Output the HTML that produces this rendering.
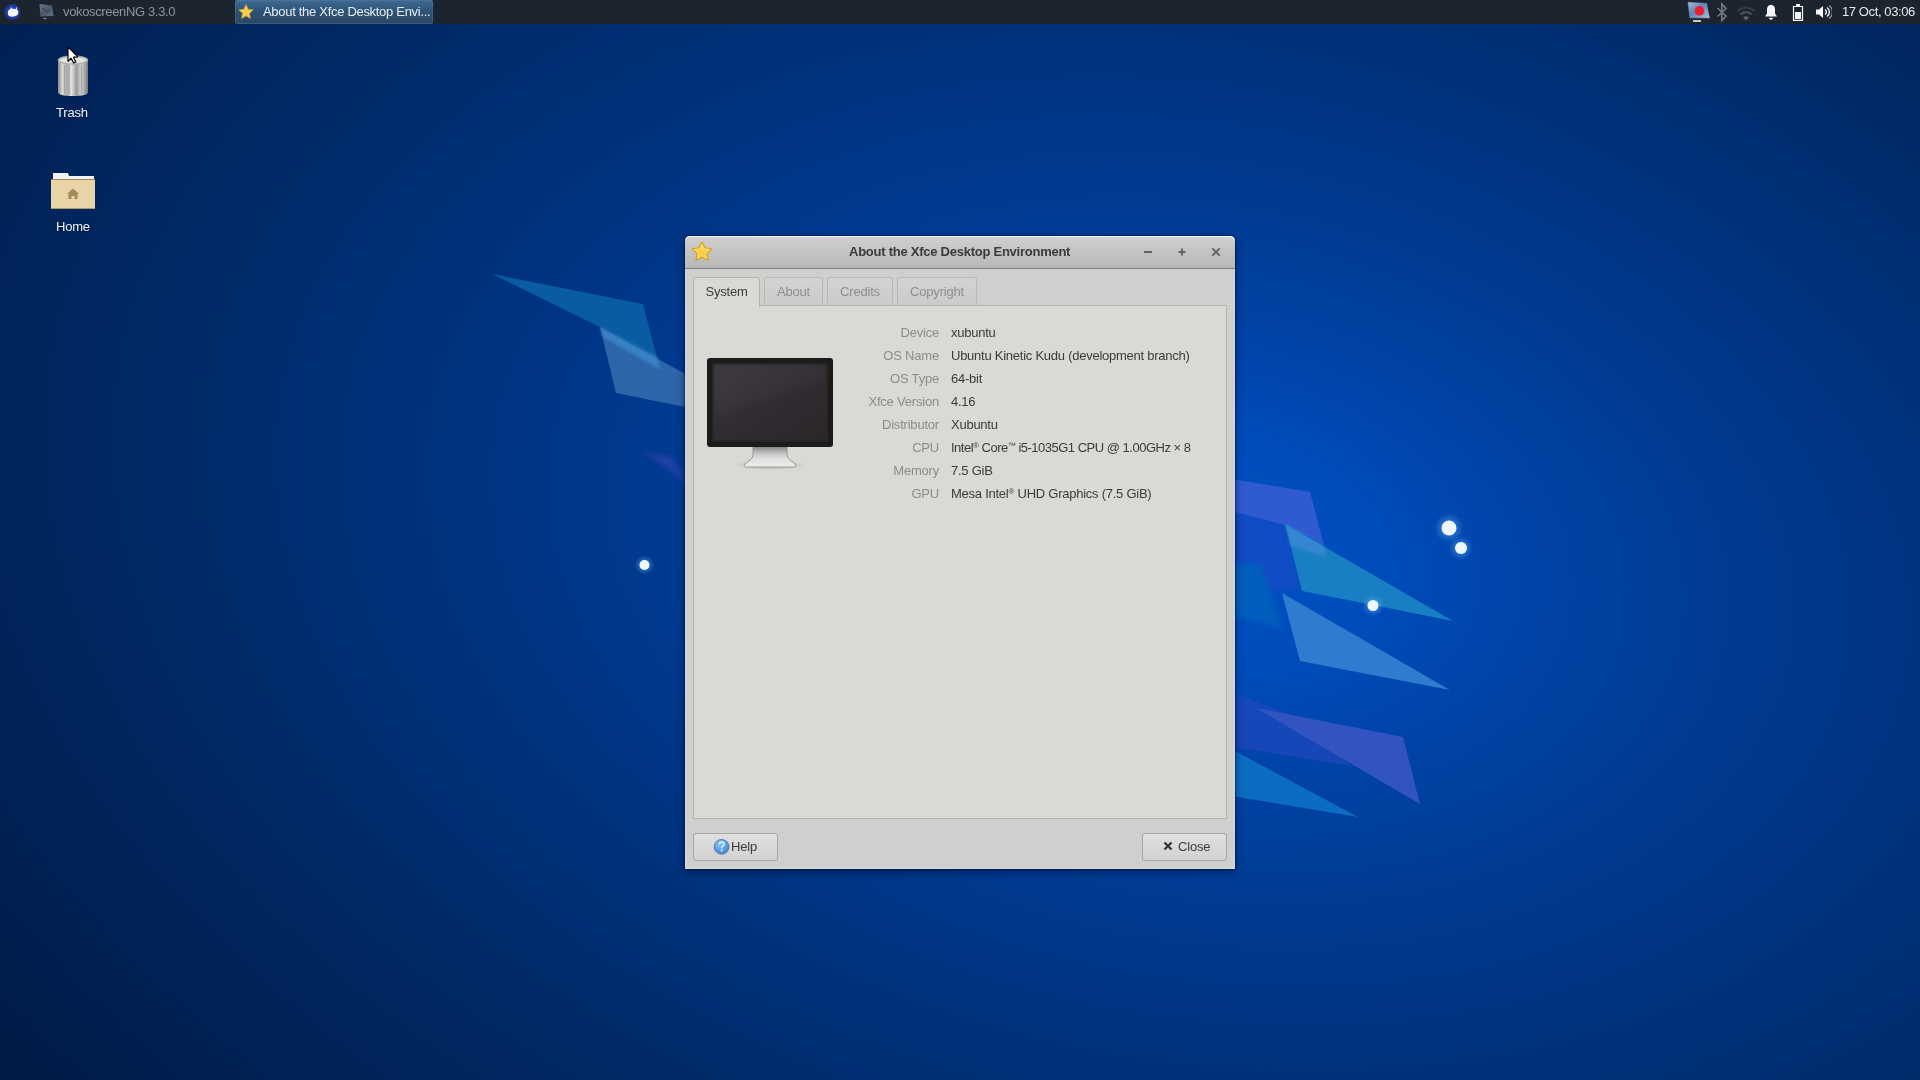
<!DOCTYPE html>
<html><head><meta charset="utf-8">
<style>
*{box-sizing:border-box;margin:0;padding:0}
html,body{width:1920px;height:1080px;overflow:hidden}
body{position:relative;font-family:"Liberation Sans",sans-serif;background:#002a68}
#bgw{position:absolute;left:0;top:0;width:1920px;height:1080px;overflow:hidden}
#bg{position:absolute;left:-800px;top:-950px;width:4000px;height:3000px;transform:rotate(10deg);
background:radial-gradient(ellipse 2000px 1300px at 2000px 1500px, #004ec0 0%, #004ec0 5%, #004bb8 10%, #0045ab 15%, #0041a0 20%, #00388c 30%, #00317a 40%, #002b6b 50%, #00255c 60%, #001f4f 70%, #001a42 80%, #001536 90%, #00102a 100%);}
svg.wall{position:absolute;left:0;top:0}
body>*{will-change:transform}
.abs{position:absolute}
.t{position:absolute;white-space:nowrap}
#panel{position:absolute;left:0;top:0;width:1920px;height:24px;background:#1c2430}
#dlg{position:absolute;left:685px;top:236px;width:550px;height:633px;background:#cfcfcd;border-radius:5px 5px 0 0;box-shadow:0 0 0 1px rgba(0,12,40,0.45),0 3px 9px rgba(0,0,30,0.5)}
#title{position:absolute;left:0;top:0;width:550px;height:33px;border-radius:5px 5px 0 0;background:linear-gradient(#d4d1da,#cbcbc9 20%,#c2c2c0 55%,#b8b8b6);border-bottom:1px solid #7e7e7e;box-shadow:inset 0 1px 0 #eaf6ff}
.lab{position:absolute;font-size:13px;color:#8c8c8c;white-space:nowrap;text-align:right;width:200px;letter-spacing:-0.2px}
.val{position:absolute;font-size:13px;color:#3b3b3b;white-space:nowrap;letter-spacing:-0.25px}
.tab{position:absolute;top:277px;height:28px;border:1px solid #b9b9b7;border-bottom:none;border-radius:3px 3px 0 0;background:linear-gradient(#d3d3d1,#cbcbc9);font-size:13px;color:#8e8e8e;text-align:center;line-height:27px;letter-spacing:-0.2px}
.btn{position:absolute;height:28px;border:1px solid #a6a6a4;border-radius:3px;background:linear-gradient(#e0e0de,#d2d2d0);font-size:13px;color:#3b3b3b}
</style></head><body>
<div id="bgw"><div id="bg"></div></div>

<svg class="wall" width="1920" height="1080" viewBox="0 0 1920 1080">
 <defs>
  <filter id="bl3" x="-20%" y="-20%" width="140%" height="140%"><feGaussianBlur stdDeviation="2.5"/></filter>
  <filter id="bl1" x="-20%" y="-20%" width="140%" height="140%"><feGaussianBlur stdDeviation="1.5"/></filter>
  <radialGradient id="glow"><stop offset="0.3" stop-color="#70b8ff" stop-opacity="0.45"/><stop offset="1" stop-color="#70b8ff" stop-opacity="0"/></radialGradient>
 </defs>
 <!-- left shapes -->
 <polygon points="492,274 643,304 657,358 600,327" fill="#095ca2"/>
 <polygon points="600,327 700,382 700,410 616,393" fill="#2c66a8"/>
 <polygon points="600,327 657,357 661,370 603,337" fill="#3a86c8" opacity="0.85" filter="url(#bl1)"/>
 <polygon points="641,451 672,457 692,488 672,472" fill="#3448b4" opacity="0.55" filter="url(#bl3)"/>
 <!-- right shapes -->
 <polygon points="1220,503 1285,524 1302,591 1220,590" fill="#1a4cc8" opacity="0.55" filter="url(#bl3)"/>
 <polygon points="1220,477 1310,492 1323.7,544 1285,525 1220,508" fill="#2f5ad0"/>
 <polygon points="1220,562 1261,565 1282,628 1220,612" fill="#005ebc" filter="url(#bl3)"/>
 <polygon points="1285,524 1453,621 1302,591" fill="#187fc4"/>
 <polygon points="1285,524 1323.7,545 1326,557 1291,546" fill="#3f88d6" opacity="0.75" filter="url(#bl1)"/>
 <polygon points="1282,593 1450,690 1300,661" fill="#2f7bcf"/>
 <polygon points="1220,688 1300,718 1352,766 1220,745" fill="#2448c0" opacity="0.6"/>
 <polygon points="1256,708 1403,737 1420,804" fill="#3254c0"/>
 <polygon points="1220,743 1358,817 1220,794" fill="#0b6cc2"/>
 <!-- dots -->
 <circle cx="644.5" cy="565" r="10" fill="url(#glow)"/><circle cx="644.5" cy="565" r="5" fill="#eef6ff"/>
 <circle cx="1449" cy="528" r="15" fill="url(#glow)"/><circle cx="1449" cy="528" r="7.5" fill="#eef6ff"/>
 <circle cx="1461" cy="548" r="12" fill="url(#glow)"/><circle cx="1461" cy="548" r="6" fill="#eef6ff"/>
 <circle cx="1373" cy="605.5" r="11" fill="url(#glow)"/><circle cx="1373" cy="605.5" r="5.5" fill="#eef6ff"/>
</svg>

<!-- PANEL -->
<div id="panel">
 <!-- xfce mouse logo -->
 <svg class="abs" style="left:4px;top:3px" width="18" height="18" viewBox="0 0 18 18">
  <defs><radialGradient id="xl" cx="0.5" cy="0.5" r="0.55"><stop offset="0.6" stop-color="#1c3eb0"/><stop offset="1" stop-color="#1c3eb0" stop-opacity="0.3"/></radialGradient></defs>
  <circle cx="8.5" cy="9" r="8.3" fill="url(#xl)"/>
  <path d="M3.8 10 C3.8 7.5 5 6.3 6.5 6 L7 4 L8.3 5.8 C9.5 5.6 10.5 5.8 11.5 6.2 L12.5 3.8 L13.2 6.8 C14.2 7.5 14.5 9 14.3 10.5 C13.5 13 10 13.8 7 13.6 C4.8 13.4 3.8 12 3.8 10Z" fill="#f4f7ff"/>
 </svg>
 <!-- vokoscreen task -->
 <svg class="abs" style="left:38px;top:3px" width="17" height="17" viewBox="0 0 17 17">
  <defs><linearGradient id="vt" x1="0" y1="0" x2="1" y2="1"><stop offset="0" stop-color="#6c7888"/><stop offset="0.5" stop-color="#4e5a6c"/><stop offset="1" stop-color="#5c6c88"/></linearGradient></defs>
  <path d="M1.5 1 L14 2.5 L15.5 13 L2.5 13.5Z" fill="url(#vt)"/>
  <path d="M4 5 L9 9 L12 7" stroke="#3c4656" stroke-width="1.2" fill="none"/>
  <rect x="5.5" y="15" width="3" height="1.2" fill="#8a8e94"/>
 </svg>
 <div class="t" style="left:63px;top:4px;font-size:13px;color:#8f949c;letter-spacing:-0.35px">vokoscreenNG 3.3.0</div>
 <!-- active task -->
 <div class="abs" style="left:235px;top:0;width:198px;height:24px;border-radius:2px;background:linear-gradient(#416b94,#2b5478 45%,#2d4762);box-shadow:inset 0 0 0 1px rgba(90,130,170,0.35)"></div>
 <svg class="abs" style="left:237px;top:3px" width="18" height="18" viewBox="0 0 18 18">
  <path d="M9 1.5 L11.2 6.2 L16.3 6.8 L12.5 10.3 L13.5 15.4 L9 12.9 L4.5 15.4 L5.5 10.3 L1.7 6.8 L6.8 6.2Z" fill="#f5cf52" stroke="#c99a2a" stroke-width="0.6"/>
 </svg>
 <div class="t" style="left:263px;top:4px;font-size:13px;color:#e8ecf0;letter-spacing:-0.3px">About the Xfce Desktop Envi...</div>

 <!-- tray -->
 <svg class="abs" style="left:1686px;top:1px" width="26" height="23" viewBox="0 0 26 23">
  <defs><linearGradient id="vk" x1="0" y1="0" x2="1" y2="1"><stop offset="0" stop-color="#a8bcd4"/><stop offset="0.45" stop-color="#5a88bc"/><stop offset="1" stop-color="#aebfd8"/></linearGradient></defs>
  <path d="M2 1.2 L20.5 2.5 L23.5 17 L4 16.8Z" fill="url(#vk)" stroke="#8898b0" stroke-width="0.6"/>
  <circle cx="13.5" cy="9.8" r="4.8" fill="#f01c2c"/>
  <rect x="7" y="19" width="8" height="2" fill="#c8c8c8"/>
 </svg>
 <svg class="abs" style="left:1715px;top:2px" width="14" height="21" viewBox="0 0 14 21">
  <path d="M2.5 6 L11 14 L6.8 18.5 V2 L11 6.5 L2.5 14.5" fill="none" stroke="#74787e" stroke-width="1.7" stroke-linejoin="miter"/>
 </svg>
 <svg class="abs" style="left:1736px;top:5px" width="20" height="16" viewBox="0 0 20 16">
  <path d="M1.5 6 A12.5 12.5 0 0 1 18.5 6" fill="none" stroke="#353b44" stroke-width="2"/>
  <path d="M4.5 9.5 A8 8 0 0 1 15.5 9.5" fill="none" stroke="#4e545c" stroke-width="2"/>
  <path d="M10 15.5 L7 12.6 A4.5 4.5 0 0 1 13 12.6Z" fill="#5e646c"/>
 </svg>
 <svg class="abs" style="left:1764px;top:4px" width="14" height="17" viewBox="0 0 14 17">
  <path d="M7 0.8 C9.8 0.8 11 3 11 5.5 V9.5 L13 12.5 H1 L3 9.5 V5.5 C3 3 4.2 0.8 7 0.8Z" fill="#f4f6f8"/>
  <path d="M5 13.8 H9 A2 2 0 0 1 5 13.8Z" fill="#f4f6f8"/>
 </svg>
 <svg class="abs" style="left:1792px;top:3px" width="12" height="18" viewBox="0 0 12 18">
  <path d="M4 1H8V3H4Z" fill="#f4f6f8"/>
  <path d="M1.5 3.5H10.5V17.3H1.5Z" fill="none" stroke="#f4f6f8" stroke-width="1.2"/>
  <path d="M3 9H9V16H3Z" fill="#f4f6f8"/>
 </svg>
 <svg class="abs" style="left:1815px;top:4px" width="17" height="16" viewBox="0 0 17 16">
  <path d="M1 5.5 H4 L8 2 V14 L4 10.5 H1Z" fill="#f4f6f8"/>
  <path d="M10 5.5 A3 3 0 0 1 10 10.5" fill="none" stroke="#f4f6f8" stroke-width="1.4"/>
  <path d="M12 3.5 A5.5 5.5 0 0 1 12 12.5" fill="none" stroke="#f4f6f8" stroke-width="1.4"/>
  <path d="M14 1.5 A8 8 0 0 1 14 14.5" fill="none" stroke="#8a8e94" stroke-width="1.3"/>
 </svg>
 <div class="t" style="left:1842px;top:4px;font-size:13px;color:#e6e8ea;letter-spacing:-0.4px">17 Oct, 03:06</div>
</div>

<!-- DESKTOP ICONS -->
<svg class="abs" style="left:56px;top:54px" width="34" height="44" viewBox="0 0 34 44">
 <defs>
  <linearGradient id="tc" x1="0" y1="0" x2="1" y2="0">
   <stop offset="0" stop-color="#8c8c8c"/><stop offset="0.15" stop-color="#d8d8d8"/><stop offset="0.3" stop-color="#a8a8a8"/><stop offset="0.45" stop-color="#e4e4e4"/><stop offset="0.6" stop-color="#a0a0a0"/><stop offset="0.78" stop-color="#d0d0d0"/><stop offset="1" stop-color="#7a7a7a"/>
  </linearGradient>
 </defs>
 <path d="M2 6 L2 38 Q2 42 17 42 Q32 42 32 38 L32 6Z" fill="url(#tc)"/>
 <path d="M8.5 11 V40 M13 11.5 V41 M21 11.5 V41 M25.5 11 V40" stroke="#8c8c8c" stroke-width="1.1" opacity="0.55"/>
 <ellipse cx="17" cy="6" rx="15" ry="4.2" fill="#c8c8c8" stroke="#a0a0a0" stroke-width="0.8"/>
 <ellipse cx="17" cy="6.3" rx="12.5" ry="2.8" fill="#e4e4e2"/>
</svg>
<div class="t" style="left:56px;top:105px;font-size:13px;color:#f0f4fa;letter-spacing:-0.2px;text-shadow:0 1px 1px rgba(0,0,0,0.4)">Trash</div>

<svg class="abs" style="left:50px;top:172px" width="46" height="38" viewBox="0 0 46 38">
 <path d="M3 3 L3 1 L18 1 L19 4 L44 4 L44 8 L3 8Z" fill="#f2f2f0"/>
 <rect x="1" y="7" width="44" height="30" fill="#e8d4a6"/>
 <rect x="1" y="7" width="44" height="1" fill="#a08860"/>
 <rect x="1" y="36" width="44" height="1" fill="#b09a70"/>
 <path d="M23 16.5 L29 22 L27.5 22 L27.5 27 L24.5 27 L24.5 24 L21.5 24 L21.5 27 L18.5 27 L18.5 22 L17 22Z" fill="#a38a5a"/>
</svg>
<div class="t" style="left:56px;top:219px;font-size:13px;color:#f0f4fa;letter-spacing:-0.2px;text-shadow:0 1px 1px rgba(0,0,0,0.4)">Home</div>

<!-- cursor -->
<svg class="abs" style="left:66px;top:45px" width="14" height="21" viewBox="0 0 14 21">
 <path d="M2 1.8 L2 16.3 L5.2 13.3 L7.6 18 L9.8 17 L7.5 12.2 L11.8 11.9Z" fill="#fff" stroke="#000" stroke-width="1.2" stroke-linejoin="round"/>
</svg>

<!-- DIALOG -->
<div id="dlg">
 <div class="abs" style="left:0;top:30px;width:550px;height:603px;border:1px solid #d2dbec;border-top:none"></div>
 <div id="title"></div>
 <svg class="abs" style="left:6px;top:4px" width="22" height="22" viewBox="0 0 22 22">
  <defs><radialGradient id="st" cx="0.5" cy="0.6" r="0.6"><stop offset="0" stop-color="#f9c93a"/><stop offset="0.7" stop-color="#f8dc68"/><stop offset="1" stop-color="#fbeaa0"/></radialGradient></defs>
  <path d="M11.00 1.70 L14.12 7.71 L20.80 8.82 L16.04 13.64 L17.05 20.33 L11.00 17.30 L4.95 20.33 L5.96 13.64 L1.20 8.82 L7.88 7.71Z" fill="url(#st)" stroke="#cf9f2a" stroke-width="1.1" stroke-linejoin="round"/>
 </svg>
 <div class="t" style="left:164px;top:8px;font-size:13px;font-weight:bold;color:#3a3a3a;letter-spacing:-0.25px">About the Xfce Desktop Environment</div>
 <!-- window buttons -->
 <div class="abs" style="left:459px;top:15px;width:8px;height:2px;background:#626262"></div>
 <svg class="abs" style="left:492px;top:11px" width="10" height="10" viewBox="0 0 10 10"><path d="M5 1.5V8.5M1.5 5H8.5" stroke="#626262" stroke-width="1.9"/></svg>
 <svg class="abs" style="left:526px;top:11px" width="10" height="10" viewBox="0 0 10 10"><path d="M1.3 1.3L8.7 8.7M8.7 1.3L1.3 8.7" stroke="#626262" stroke-width="1.9"/></svg>
</div>

<!-- notebook (absolute to page) -->
<div class="abs" style="left:693px;top:305px;width:534px;height:514px;background:#d9dad5;border:1px solid #b5b5b3"></div>
<div class="tab" style="left:764px;width:59px">About</div>
<div class="tab" style="left:827px;width:66px">Credits</div>
<div class="tab" style="left:897px;width:80px">Copyright</div>
<div class="tab" style="left:693px;width:67px;top:277px;height:30px;background:#d9dad5;color:#3c3c3c;border-color:#b5b5b3">System</div>

<!-- monitor icon -->
<svg class="abs" style="left:700px;top:350px" width="140" height="125" viewBox="0 0 140 125">
 <defs>
  <linearGradient id="scr" x1="0" y1="0" x2="1" y2="1"><stop offset="0" stop-color="#3a363c"/><stop offset="0.5" stop-color="#312c32"/><stop offset="1" stop-color="#2a2629"/></linearGradient>
  <linearGradient id="neck" x1="0" y1="0" x2="0" y2="1"><stop offset="0" stop-color="#7c7c7c"/><stop offset="0.35" stop-color="#c4c4c4"/><stop offset="0.6" stop-color="#dedede"/><stop offset="1" stop-color="#eeeeee"/></linearGradient>
  <filter id="mb" x="-10%" y="-10%" width="120%" height="120%"><feGaussianBlur stdDeviation="4"/></filter>
  <radialGradient id="shd"><stop offset="0" stop-color="#000" stop-opacity="0.25"/><stop offset="1" stop-color="#000" stop-opacity="0"/></radialGradient>
 </defs>
 <ellipse cx="70" cy="115" rx="35" ry="5" fill="url(#shd)"/>
 <path d="M53 96 H87 V104 Q87 108 90 110 L95 114 Q97 117 94 117 H46 Q43 117 45 114 L50 110 Q53 108 53 104Z" fill="url(#neck)" stroke="#8a8a8a" stroke-width="0.8"/>
 <rect x="7" y="8" width="126" height="89" rx="3" fill="#1b1b1a"/>
 <rect x="12" y="13" width="116" height="79" rx="1" fill="#262626"/>
 <rect x="14" y="15" width="112" height="75" fill="url(#scr)"/>
 <polygon points="14,15 126,15 126,30 14,66" fill="#ffffff" opacity="0.025" filter="url(#mb)"/>
</svg>

<!-- info rows -->
<div class="lab" style="left:739px;top:325px">Device</div><div class="val" style="left:951px;top:325px">xubuntu</div>
<div class="lab" style="left:739px;top:348px">OS Name</div><div class="val" style="left:951px;top:348px">Ubuntu Kinetic Kudu (development branch)</div>
<div class="lab" style="left:739px;top:371px">OS Type</div><div class="val" style="left:951px;top:371px">64-bit</div>
<div class="lab" style="left:739px;top:394px">Xfce Version</div><div class="val" style="left:951px;top:394px">4.16</div>
<div class="lab" style="left:739px;top:417px">Distributor</div><div class="val" style="left:951px;top:417px">Xubuntu</div>
<div class="lab" style="left:739px;top:440px">CPU</div><div class="val" style="left:951px;top:440px;letter-spacing:-0.5px">Intel<span style="font-size:8px;vertical-align:4px">®</span> Core<span style="font-size:8px;vertical-align:4px">™</span> i5-1035G1 CPU @ 1.00GHz × 8</div>
<div class="lab" style="left:739px;top:463px">Memory</div><div class="val" style="left:951px;top:463px">7.5 GiB</div>
<div class="lab" style="left:739px;top:486px">GPU</div><div class="val" style="left:951px;top:486px">Mesa Intel<span style="font-size:8px;vertical-align:4px">®</span> UHD Graphics (7.5 GiB)</div>

<!-- buttons -->
<div class="btn" style="left:693px;top:833px;width:85px">
 <svg class="abs" style="left:18px;top:3px" width="18" height="18" viewBox="0 0 18 18">
  <defs><radialGradient id="hq" cx="0.4" cy="0.3" r="0.8"><stop offset="0" stop-color="#8cc8f8"/><stop offset="1" stop-color="#3a7cd0"/></radialGradient></defs>
  <circle cx="9.6" cy="9.8" r="7.4" fill="url(#hq)" stroke="#3a64a8" stroke-width="0.7"/>
  <path d="M7.3 7.3 Q7.3 5 9.8 5 Q12.2 5 12.2 7.1 Q12.2 8.4 10.8 9.2 Q9.9 9.8 9.7 11.3" fill="none" stroke="#d8f4ff" stroke-width="1.4"/>
  <circle cx="9.6" cy="13.6" r="1" fill="#d8f4ff"/>
 </svg>
 <div class="t" style="left:37px;top:5px;letter-spacing:-0.2px">Help</div>
</div>
<div class="btn" style="left:1142px;top:833px;width:85px">
 <svg class="abs" style="left:20px;top:7px" width="10" height="10" viewBox="0 0 10 10"><path d="M1.5 1.5L8.5 8.5M8.5 1.5L1.5 8.5" stroke="#333" stroke-width="2.2"/></svg>
 <div class="t" style="left:35px;top:5px;letter-spacing:-0.2px">Close</div>
</div>

</body></html>
